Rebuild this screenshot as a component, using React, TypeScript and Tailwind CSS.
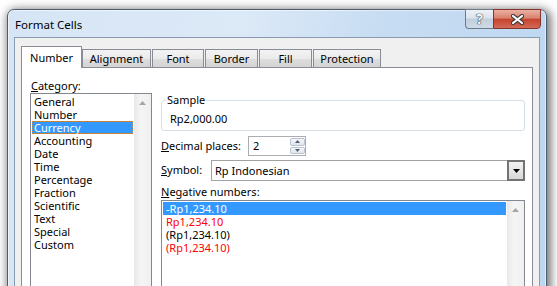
const categories = [
  "General", "Number", "Currency", "Accounting", "Date", "Time",
  "Percentage", "Fraction", "Scientific", "Text", "Special", "Custom",
];

const negatives = [
  { text: "-Rp1,234.10", color: "text-white", selected: true },
  { text: "Rp1,234.10", color: "text-[#ff0000]", selected: false },
  { text: "(Rp1,234.10)", color: "text-black", selected: false },
  { text: "(Rp1,234.10)", color: "text-[#ff0000]", selected: false },
];

const tabs = [
  { name: "Number", w: "w-[61px]", ml: "" },
  { name: "Alignment", w: "w-[69px]", ml: "" },
  { name: "Font", w: "w-[52px]", ml: "ml-[1px]" },
  { name: "Border", w: "w-[53px]", ml: "ml-[1px]" },
  { name: "Fill", w: "w-[53px]", ml: "ml-[1px]" },
  { name: "Protection", w: "w-[68px]", ml: "ml-[1px]" },
];

const Arrow = ({ down = false, color = "#a6a6a6", w = 7, h = 4 }) => (
  <svg width={w} height={h} viewBox={`0 0 ${w} ${h}`}>
    <path d={down ? `M0 0 L${w} 0 L${w / 2} ${h} Z` : `M0 ${h} L${w / 2} 0 L${w} ${h} Z`} fill={color} />
  </svg>
);

const ScrollTrack = () => (
  <div className="w-[17px] bg-[linear-gradient(to_right,#e8e8e8,#f5f5f5_40%,#f0f0f0)]">
    <div className="flex h-[17px] items-center justify-center">
      <Arrow />
    </div>
  </div>
);

export default function App() {
  return (
    <div className="h-[286px] w-[557px] overflow-hidden bg-white pl-[7px] pt-[9px] font-['Noto_Sans',sans-serif] text-[11px] text-black">
      <div className="flex h-[300px] w-[540px] flex-col rounded-t-[7px] border border-[#4e5d6e] bg-[linear-gradient(100deg,#d6e5f5_0%,#dce9f7_40%,#c6dcf2_65%,#bdd7f1_100%)] shadow-[2px_2px_10px_2px_rgba(0,0,0,0.55),inset_0_0_0_1px_rgba(255,255,255,0.55)]">
        {/* title bar */}
        <div className="flex h-[27px] shrink-0 items-start justify-between">
          <span className="pl-[7px] pt-[7px] text-[11.5px] leading-[15px]">Format Cells</span>
          <div className="-mt-px mr-[5px] flex">
            <div className="flex h-[20px] w-[28px] items-center justify-center rounded-bl-[4px] border border-r-0 border-[#6b7a8c] bg-[linear-gradient(to_bottom,#eef2f7,#dbe3ed_45%,#c2cedc_50%,#cfdae7)]">
              <span className="text-[14px] font-bold leading-[14px] text-[#f7f9fb] [text-shadow:0_0_1px_#323c48,0_0_1px_#323c48,0_0_1px_#323c48]">?</span>
            </div>
            <div className="flex h-[20px] w-[48px] items-center justify-center rounded-br-[4px] border border-[#83352c] bg-[linear-gradient(to_bottom,#eab0a4,#d9826f_45%,#c4442f_52%,#d36a57)]">
              <svg width="13" height="11" viewBox="0 0 13 11">
                <path d="M2 2 L11 9 M11 2 L2 9" stroke="#3f3a3a" strokeWidth="4.2" strokeLinecap="round" />
                <path d="M2 2 L11 9 M11 2 L2 9" stroke="#ffffff" strokeWidth="2.2" strokeLinecap="round" />
              </svg>
            </div>
          </div>
        </div>

        {/* client area */}
        <div className="mx-[6px] min-h-0 flex-1 border border-[#8a9bb0] bg-[#f0f0f0] px-[6px] pt-[8px]">
          <div className="flex h-[21px] items-end">
            {tabs.map((t, i) =>
              i === 0 ? (
                <div
                  key={t.name}
                  className={`relative z-10 -mb-px flex h-[22px] justify-center border border-b-0 border-[#898c95] bg-white pt-[3px] leading-[15px] ${t.w}`}
                >
                  {t.name}
                </div>
              ) : (
                <div
                  key={t.name}
                  className={`flex h-[18px] items-center justify-center border border-b-0 border-[#898c95] bg-[linear-gradient(to_bottom,#f3f3f3,#ebebeb_50%,#dedede_51%,#d4d4d4)] leading-[15px] ${t.w} ${t.ml}`}
                >
                  {t.name}
                </div>
              )
            )}
          </div>

          <div className="flex h-[235px] border border-[#898c95] bg-white">
            {/* category column */}
            <div className="ml-[8px] flex w-[122px] flex-col">
              <div className="mt-[11px] pl-[1px] leading-[14px]">
                <span className="underline">C</span>ategory:
              </div>
              <div className="flex h-[200px] border border-[#828790] bg-white">
                <div className="flex-1 p-px">
                  {categories.map((c) => (
                    <div
                      key={c}
                      className={
                        c === "Currency"
                          ? "h-[13px] border border-dotted border-[#d08a3c] bg-[#3399ff] pl-[1px] leading-[11px] text-white"
                          : "h-[13px] pl-[2px] leading-[13px]"
                      }
                    >
                      {c}
                    </div>
                  ))}
                </div>
                <ScrollTrack />
              </div>
            </div>

            {/* options column */}
            <div className="ml-[9px] flex w-[364px] flex-col">
              <div className="relative mt-[32px] h-[31px] shrink-0 rounded-[3px] border border-[#d5dfe5]">
                <span className="absolute left-[4px] top-[-8px] bg-white px-[1px] leading-[14px]">Sample</span>
                <div className="pl-[8px] pt-[11px] leading-[14px]">Rp2,000.00</div>
              </div>

              <div className="mt-[5px] flex h-[20px] shrink-0 items-center">
                <span className="w-[87px]">
                  <span className="underline">D</span>ecimal places:
                </span>
                <div className="flex h-[20px] w-[58px] border border-[#abadb3] bg-white">
                  <span className="flex-1 pl-[4px] leading-[18px]">2</span>
                  <div className="flex w-[15px] flex-col gap-[1px] py-px">
                    <div className="flex h-[8px] items-center justify-center rounded-[2px] border border-[#b9c3d1] bg-[linear-gradient(to_bottom,#f6f7f9,#e1e5ea)]">
                      <Arrow color="#4b5e80" w={5} h={3} />
                    </div>
                    <div className="flex h-[8px] items-center justify-center rounded-[2px] border border-[#b9c3d1] bg-[linear-gradient(to_bottom,#f6f7f9,#e1e5ea)]">
                      <Arrow down color="#4b5e80" w={5} h={3} />
                    </div>
                  </div>
                </div>
              </div>

              <div className="mt-[4px] flex h-[21px] shrink-0 items-center">
                <span className="w-[50px]">
                  <span className="underline">S</span>ymbol:
                </span>
                <div className="flex h-[21px] w-[314px]">
                  <div className="flex-1 border-y border-l border-[#a2a2a2] bg-white pl-[3px] leading-[19px]">Rp Indonesian</div>
                  <div className="flex w-[18px] items-center justify-center border-2 border-[#737373] bg-[linear-gradient(to_bottom,#f2f2f2,#e6e6e6_50%,#d6d6d6)]">
                    <Arrow down color="#000000" w={7} h={4} />
                  </div>
                </div>
              </div>

              <div className="mt-[3px] shrink-0 leading-[15px]">
                <span className="underline">N</span>egative numbers:
              </div>
              <div className="mt-[1px] flex h-[100px] shrink-0 border border-[#828790] bg-white">
                <div className="flex-1 p-px">
                  {negatives.map((n, i) => (
                    <div
                      key={i}
                      className={`h-[13px] pl-[3px] leading-[13px] ${n.color} ${n.selected ? "bg-[#3399ff]" : ""}`}
                    >
                      {n.text}
                    </div>
                  ))}
                </div>
                <ScrollTrack />
              </div>
            </div>
          </div>
        </div>
      </div>
    </div>
  );
}
